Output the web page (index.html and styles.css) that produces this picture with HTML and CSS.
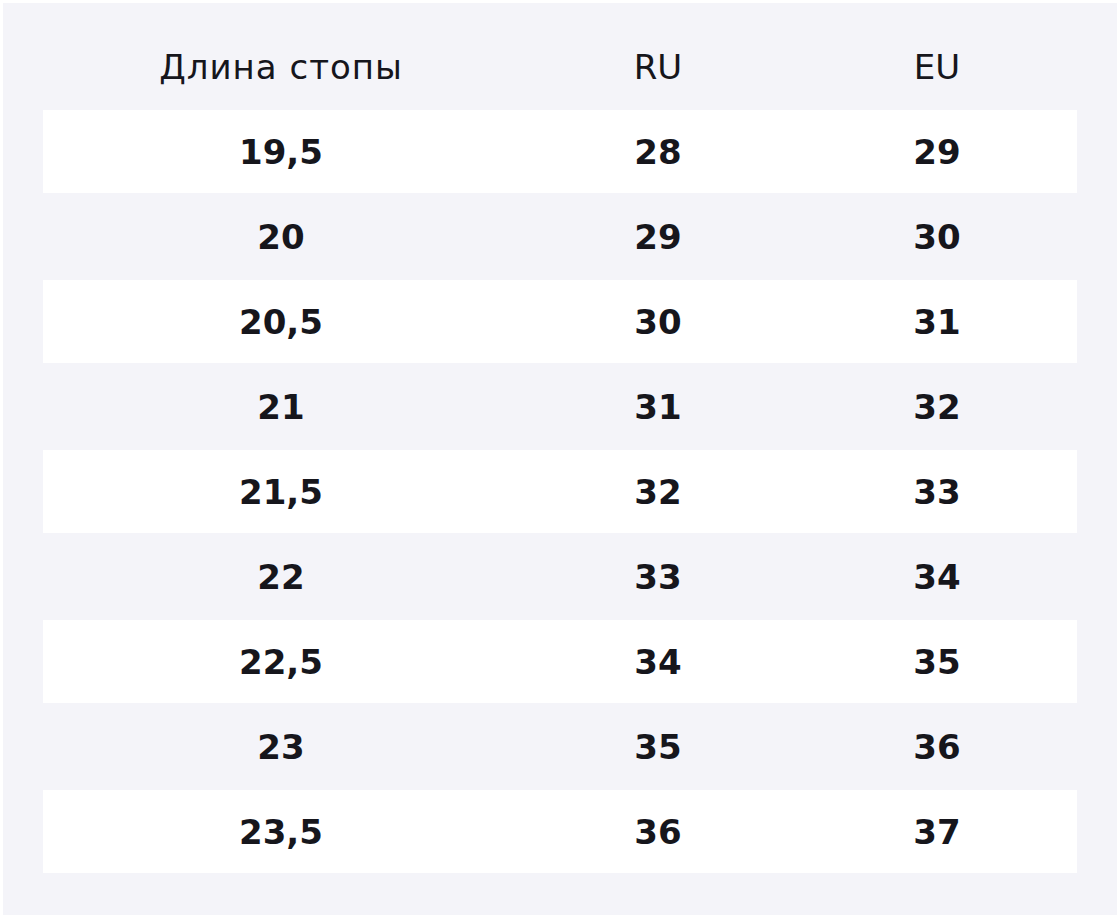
FILE: index.html
```html
<!DOCTYPE html>
<html lang="ru">
<head>
<meta charset="utf-8">
<title>Таблица размеров</title>
<link rel="stylesheet" href="styles.css">
</head>
<body>
<div class="sheet">
  <div class="row head"><div class="wide">Длина стопы</div><div>RU</div><div>EU</div></div>
  <div class="row odd"><div>19,5</div><div>28</div><div>29</div></div>
  <div class="row"><div>20</div><div>29</div><div>30</div></div>
  <div class="row odd"><div>20,5</div><div>30</div><div>31</div></div>
  <div class="row"><div>21</div><div>31</div><div>32</div></div>
  <div class="row odd"><div>21,5</div><div>32</div><div>33</div></div>
  <div class="row"><div>22</div><div>33</div><div>34</div></div>
  <div class="row odd"><div>22,5</div><div>34</div><div>35</div></div>
  <div class="row"><div>23</div><div>35</div><div>36</div></div>
  <div class="row odd"><div>23,5</div><div>36</div><div>37</div></div>
</div>
</body>
</html>
```
FILE: styles.css
```css
html, body { background: #ffffff; }
body { margin: 3px; font-family: "DejaVu Sans", sans-serif; color: #16161c; }
.sheet {
  box-sizing: border-box;
  width: 1114px;
  height: 912px;
  background: #f4f4f9;
  padding: 22px 40px 42px;
  display: flex;
  flex-direction: column;
  gap: 2px;
}
.row {
  height: 83px;
  display: grid;
  grid-template-columns: 476px 278px 1fr;
  align-items: center;
  text-align: center;
  font-size: 34px;
  font-weight: bold;
  flex: none;
}
.row.odd { background: #ffffff; }
.row.head { font-weight: normal; }
.row.head .wide { letter-spacing: 1px; }
```
